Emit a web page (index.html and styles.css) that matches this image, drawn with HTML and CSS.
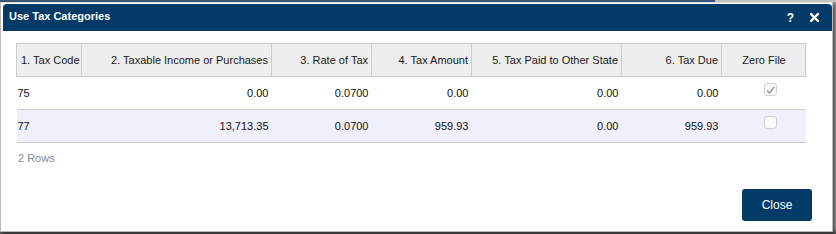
FILE: index.html
```html
<!DOCTYPE html>
<html lang="en">
<head>
  <meta charset="UTF-8">
  <meta name="viewport" content="width=device-width, initial-scale=1.0">
  <title>Use Tax Categories</title>
  <link rel="stylesheet" href="styles.css">
</head>
<body>
  <div class="backdrop">
    <div class="topStrip"></div>
    <div class="modal">
      <div class="modalTitle">
        <span class="titleText">Use Tax Categories</span>
        <div class="titleIcons">
          <span class="iconHelp">?</span>
          <svg class="iconClose" width="9" height="9" viewBox="0 0 9 9">
            <path d="M1 1 L8 8 M8 1 L1 8" stroke="#fff" stroke-width="2.4" stroke-linecap="square"/>
          </svg>
        </div>
      </div>
      <div class="modalBody">
        <table class="grid">
          <thead>
            <tr>
              <th class="colCode">1. Tax Code</th>
              <th class="num colIncome">2. Taxable Income or Purchases</th>
              <th class="num colRate">3. Rate of Tax</th>
              <th class="num colAmount">4. Tax Amount</th>
              <th class="num colPaid">5. Tax Paid to Other State</th>
              <th class="num colDue">6. Tax Due</th>
              <th class="colZero">Zero File</th>
            </tr>
          </thead>
          <tbody>
            <tr>
              <td class="code">75</td>
              <td class="num">0.00</td>
              <td class="num">0.0700</td>
              <td class="num">0.00</td>
              <td class="num">0.00</td>
              <td class="num">0.00</td>
              <td class="zero">
                <span class="check checked">
                  <svg width="9" height="8" viewBox="0 0 9 8">
                    <path d="M1 4.5 L3.5 7 L8 1" fill="none" stroke="#9a9a9a" stroke-width="1.5"/>
                  </svg>
                </span>
              </td>
            </tr>
            <tr class="alt">
              <td class="code">77</td>
              <td class="num">13,713.35</td>
              <td class="num">0.0700</td>
              <td class="num">959.93</td>
              <td class="num">0.00</td>
              <td class="num">959.93</td>
              <td class="zero"><span class="check"></span></td>
            </tr>
          </tbody>
        </table>
        <div class="rowCount">2 Rows</div>
      </div>
      <div class="modalFooter">
        <button class="btnClose">Close</button>
      </div>
    </div>
  </div>
</body>
</html>
```

FILE: styles.css
```css
body {
  margin: 0;
  background: #6a6a6a;
  font-family: "Liberation Sans", Arial, sans-serif;
}

.backdrop {
  width: 836px;
  height: 234px;
  overflow: hidden;
  background: linear-gradient(to bottom, #9a9a9a 0, #9a9a9a 228px, #4a4a4a 234px);
}

.topStrip {
  height: 2px;
  background: linear-gradient(to right, #3d5878 0, #3d5878 715px, #c4c4c4 715px);
}

.modal {
  width: 831px;
  height: 228px;
  background: #fff;
  border: 1px solid #b8b8b8;
  border-top-color: #e0e0e0;
  display: flex;
  flex-direction: column;
  box-shadow: 2px 2px 3px rgba(0, 0, 0, .45);
}

.modalTitle {
  height: 27px;
  margin: 1px 0 0 2px;
  background: #033a67;
  border-radius: 4px 4px 0 0;
  display: flex;
  align-items: center;
  justify-content: space-between;
  padding: 0 13px 0 6px;
  color: #fff;
}

.titleText {
  font-size: 11px;
  font-weight: bold;
  position: relative;
  top: -2px;
}

.titleIcons {
  display: flex;
  align-items: center;
  gap: 16px;
}

.iconHelp {
  font-size: 12px;
  font-weight: bold;
}

.iconClose {
  display: block;
}

.modalBody {
  padding: 12px 0 0 15px;
  flex: 1;
}

.grid {
  border-collapse: collapse;
  width: 789px;
  table-layout: fixed;
  font-size: 11px;
  color: #111;
}

.grid th {
  box-sizing: border-box;
  height: 33px;
  background: #eee;
  border: 1px solid #ccc;
  font-weight: normal;
  color: #1a1a1a;
  padding: 0 3px 0 4px;
  text-align: left;
  white-space: nowrap;
}

.grid th.num {
  text-align: right;
}

.grid th.colZero {
  text-align: center;
}

.grid th.colCode {
  padding-right: 0;
}

.colCode { width: 65px; }
.colIncome { width: 190px; }
.colRate { width: 100px; }
.colAmount { width: 100px; }
.colPaid { width: 150px; }
.colDue { width: 100px; }
.colZero { width: 84px; }

.grid td {
  height: 32px;
  border-bottom: 1px solid #ccc;
  padding: 0 3px;
}

.grid td.code {
  padding-left: 1px;
}

.grid td.num {
  text-align: right;
}

.grid td.zero {
  vertical-align: top;
  padding: 0 0 0 42px;
}

.grid tr.alt td {
  background: #f0f0fc;
}

.check {
  display: flex;
  align-items: center;
  justify-content: center;
  width: 11px;
  height: 11px;
  margin-top: 6px;
  border: 1px solid #cfcfd6;
  border-radius: 3px;
  background: #fafafd;
}

.rowCount {
  margin: 9px 0 0 2px;
  font-size: 11px;
  color: #888;
}

.modalFooter {
  display: flex;
  justify-content: flex-end;
  padding: 0 20px 10px 0;
}

.btnClose {
  width: 70px;
  height: 32px;
  border: none;
  border-radius: 3px;
  background: #033a67;
  color: #fff;
  font-family: "Liberation Sans", Arial, sans-serif;
  font-size: 12px;
}
```
